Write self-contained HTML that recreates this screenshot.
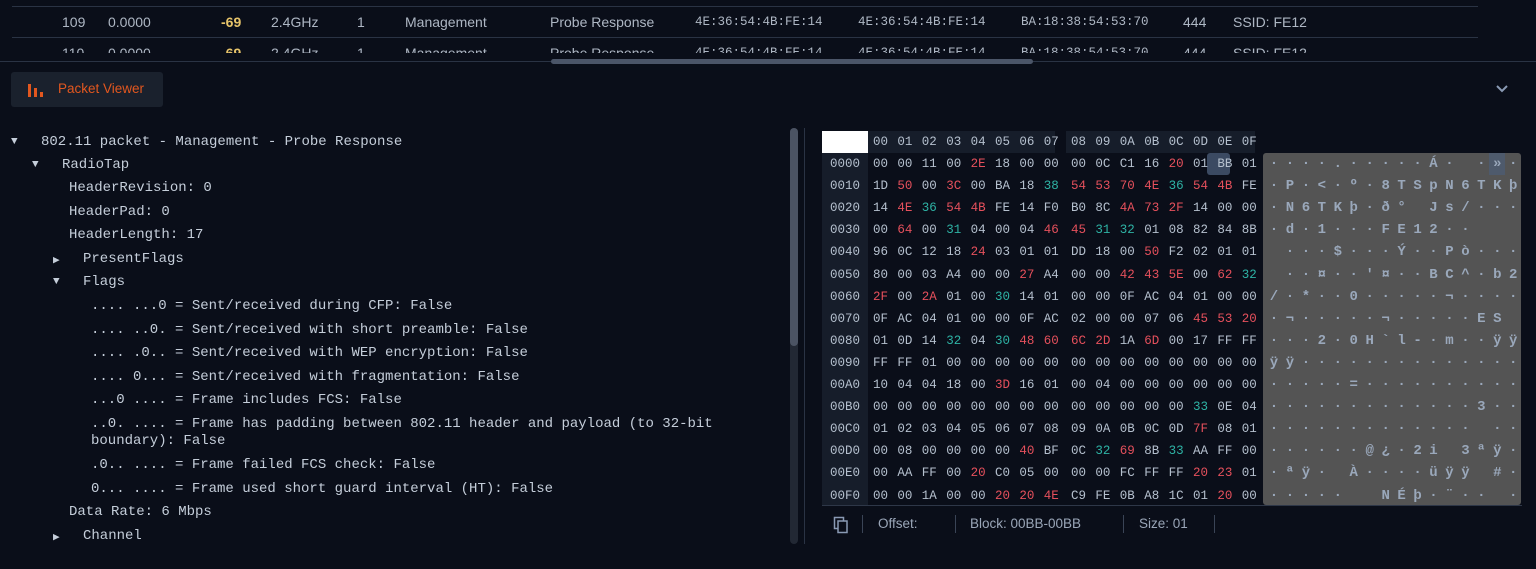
<!DOCTYPE html>
<html><head><meta charset="utf-8"><style>
*{margin:0;padding:0;box-sizing:border-box}
body{width:1536px;height:569px;background:#0a0e19;overflow:hidden;position:relative;font-family:"Liberation Sans",sans-serif;color:#c3ccd8}
.a{position:absolute;white-space:nowrap}
.hl{position:absolute;height:1px;background:#2a3344}
.tb{font-size:14px;color:#aeb7c4}
.mono{font-family:"Liberation Mono",monospace}
.tree{font-family:"Liberation Mono",monospace;font-size:14px;color:#c5ceda}
.tri{font-size:11px;color:#c5ceda}
.hx{font-family:"Liberation Mono",monospace;font-size:12.5px;color:#b5c0ce}
.r{color:#e5505c}.t{color:#2eb3a5}
.asc{font-family:"Liberation Mono",monospace;font-size:14px;font-weight:bold;color:#9aa8bb;text-align:center;width:16px}
</style></head><body>
<div class="hl" style="left:12px;top:6px;width:1466px"></div>
<div class="hl" style="left:12px;top:37px;width:1466px"></div>
<div class="hl" style="left:0;top:61px;width:1536px"></div>
<div style="position:absolute;left:0;top:38px;width:1536px;height:15px;overflow:hidden">
 <div class="a tb" style="left:62px;top:7px">110</div><div class="a tb" style="left:108px;top:7px">0.0000</div>
 <div class="a tb" style="top:7px;color:#e7c46a;font-weight:bold;left:221px">-69</div>
 <div class="a tb" style="left:271px;top:7px">2.4GHz</div><div class="a tb" style="left:357px;top:7px">1</div>
 <div class="a tb" style="left:405px;top:7px">Management</div><div class="a tb" style="left:550px;top:7px">Probe Response</div>
 <div class="a tb mono" style="left:695px;top:8px;font-size:12.5px">4E:36:54:4B:FE:14</div>
 <div class="a tb mono" style="left:858px;top:8px;font-size:12.5px">4E:36:54:4B:FE:14</div>
 <div class="a tb mono" style="left:1021px;top:8px;font-size:12.5px">BA:18:38:54:53:70</div>
 <div class="a tb" style="left:1183px;top:7px">444</div><div class="a tb" style="left:1233px;top:7px">SSID: FE12</div>
</div>
<div class="a tb" style="left:62px;top:14px">109</div><div class="a tb" style="left:108px;top:14px">0.0000</div>
<div class="a tb" style="left:221px;top:14px;color:#e7c46a;font-weight:bold">-69</div>
<div class="a tb" style="left:271px;top:14px">2.4GHz</div><div class="a tb" style="left:357px;top:14px">1</div>
<div class="a tb" style="left:405px;top:14px">Management</div><div class="a tb" style="left:550px;top:14px">Probe Response</div>
<div class="a tb mono" style="left:695px;top:15px;font-size:12.5px">4E:36:54:4B:FE:14</div>
<div class="a tb mono" style="left:858px;top:15px;font-size:12.5px">4E:36:54:4B:FE:14</div>
<div class="a tb mono" style="left:1021px;top:15px;font-size:12.5px">BA:18:38:54:53:70</div>
<div class="a tb" style="left:1183px;top:14px">444</div><div class="a tb" style="left:1233px;top:14px">SSID: FE12</div>
<div style="position:absolute;left:551px;top:59px;width:482px;height:5px;border-radius:3px;background:#4b5568"></div>

<div style="position:absolute;left:11px;top:72px;width:152px;height:35px;background:#1a212d;border-radius:3px"></div>
<svg class="a" style="left:26px;top:81px" width="18" height="17"><rect x="2" y="3" width="3" height="13" fill="#e2571f"/><rect x="8" y="7" width="3" height="9" fill="#e2571f"/><rect x="14" y="11" width="3" height="5" fill="#e2571f"/></svg>
<div class="a" style="left:58px;top:81px;font-size:13.5px;color:#e2571f">Packet Viewer</div>
<svg class="a" style="left:1495px;top:84px" width="14" height="10"><path d="M2 2 L7 7 L12 2" stroke="#8a9ab4" stroke-width="2" fill="none"/></svg>

<div class="tree">
<div class="a tri" style="left:11px;top:136px">▼</div><div class="a" style="left:41px;top:134px">802.11 packet - Management - Probe Response</div>
<div class="a tri" style="left:32px;top:159px">▼</div><div class="a" style="left:62px;top:157px">RadioTap</div>
<div class="a" style="left:69px;top:180px">HeaderRevision: 0</div>
<div class="a" style="left:69px;top:204px">HeaderPad: 0</div>
<div class="a" style="left:69px;top:227px">HeaderLength: 17</div>
<div class="a tri" style="left:53px;top:253px">▶</div><div class="a" style="left:83px;top:251px">PresentFlags</div>
<div class="a tri" style="left:53px;top:276px">▼</div><div class="a" style="left:83px;top:274px">Flags</div>
<div class="a" style="left:91px;top:298px">.... ...0 = Sent/received during CFP: False</div>
<div class="a" style="left:91px;top:322px">.... ..0. = Sent/received with short preamble: False</div>
<div class="a" style="left:91px;top:345px">.... .0.. = Sent/received with WEP encryption: False</div>
<div class="a" style="left:91px;top:369px">.... 0... = Sent/received with fragmentation: False</div>
<div class="a" style="left:91px;top:392px">...0 .... = Frame includes FCS: False</div>
<div class="a" style="left:91px;top:416px">..0. .... = Frame has padding between 802.11 header and payload (to 32-bit</div>
<div class="a" style="left:91px;top:433px">boundary): False</div>
<div class="a" style="left:91px;top:457px">.0.. .... = Frame failed FCS check: False</div>
<div class="a" style="left:91px;top:481px">0... .... = Frame used short guard interval (HT): False</div>
<div class="a" style="left:69px;top:504px">Data Rate: 6 Mbps</div>
<div class="a tri" style="left:53px;top:530px">▶</div><div class="a" style="left:83px;top:528px">Channel</div>
</div>
<div style="position:absolute;left:790px;top:128px;width:8px;height:416px;border-radius:4px;background:#222834"></div>
<div style="position:absolute;left:790px;top:128px;width:8px;height:218px;border-radius:4px;background:#4b5363"></div>
<div style="position:absolute;left:804px;top:128px;width:1px;height:416px;background:#2a3344"></div>

<div style="position:absolute;left:822px;top:131px;width:46px;height:22px;background:#fff"></div>
<div style="position:absolute;left:868px;top:131px;width:187px;height:22px;background:#161d2a"></div>
<div style="position:absolute;left:1066px;top:131px;width:189px;height:22px;background:#161d2a"></div>
<div style="position:absolute;left:822px;top:153px;width:46px;height:352px;background:#161d2a"></div>
<div style="position:absolute;left:1263px;top:153px;width:258px;height:352px;background:#545454;border-radius:3px"></div>
<div style="position:absolute;left:1207px;top:153px;width:23px;height:22px;background:#3b4a62;border-radius:3px"></div>
<div style="position:absolute;left:1489px;top:153px;width:16px;height:22px;background:#4e5a6c"></div>
<div class="hl" style="left:822px;top:505px;width:700px;background:#2e3748"></div>
<div id="hex"></div>
<svg class="a" style="left:833px;top:516px" width="16" height="18"><rect x="1.5" y="1.5" width="9" height="11" fill="none" stroke="#8a9ab4" stroke-width="1.5"/><rect x="5" y="5" width="9" height="11.5" fill="#0a0e19" stroke="#8a9ab4" stroke-width="1.5"/></svg>
<div class="a" style="left:862px;top:515px;width:1px;height:18px;background:#3a4456"></div>
<div class="a" style="left:878px;top:516px;font-size:13.5px;color:#9aa6b8">Offset:</div>
<div class="a" style="left:955px;top:515px;width:1px;height:18px;background:#3a4456"></div>
<div class="a" style="left:970px;top:516px;font-size:13.5px;color:#9aa6b8">Block: 00BB-00BB</div>
<div class="a" style="left:1123px;top:515px;width:1px;height:18px;background:#3a4456"></div>
<div class="a" style="left:1139px;top:516px;font-size:13.5px;color:#9aa6b8">Size: 01</div>
<div class="a" style="left:1214px;top:515px;width:1px;height:18px;background:#3a4456"></div>
<script>
var rows=["00 00 11 00 2E 18 00 00 00 0C C1 16 20 01 BB 01","1D 50 00 3C 00 BA 18 38 54 53 70 4E 36 54 4B FE","14 4E 36 54 4B FE 14 F0 B0 8C 4A 73 2F 14 00 00","00 64 00 31 04 00 04 46 45 31 32 01 08 82 84 8B","96 0C 12 18 24 03 01 01 DD 18 00 50 F2 02 01 01","80 00 03 A4 00 00 27 A4 00 00 42 43 5E 00 62 32","2F 00 2A 01 00 30 14 01 00 00 0F AC 04 01 00 00","0F AC 04 01 00 00 0F AC 02 00 00 07 06 45 53 20","01 0D 14 32 04 30 48 60 6C 2D 1A 6D 00 17 FF FF","FF FF 01 00 00 00 00 00 00 00 00 00 00 00 00 00","10 04 04 18 00 3D 16 01 00 04 00 00 00 00 00 00","00 00 00 00 00 00 00 00 00 00 00 00 00 33 0E 04","01 02 03 04 05 06 07 08 09 0A 0B 0C 0D 7F 08 01","00 08 00 00 00 00 40 BF 0C 32 69 8B 33 AA FF 00","00 AA FF 00 20 C0 05 00 00 00 FC FF FF 20 23 01","00 00 1A 00 00 20 20 4E C9 FE 0B A8 1C 01 20 00"];
var h="";var hd="00 01 02 03 04 05 06 07 08 09 0A 0B 0C 0D 0E 0F".split(" ");
function cx(i){return i<8?873+i*24.4:1071+(i-8)*24.4;}
for(var i=0;i<16;i++)h+='<div class="a hx" style="left:'+cx(i)+'px;top:135px">'+hd[i]+'</div>';
for(var r=0;r<16;r++){var y=157+r*22.1;var b=rows[r].split(" ");
h+='<div class="a hx" style="left:830px;top:'+y+'px">'+("000"+(r*16).toString(16).toUpperCase()).slice(-4)+'</div>';
for(var i=0;i<16;i++){var v=parseInt(b[i],16);var c=(v>=0x30&&v<=0x39)?'t':(v>=0x20&&v<=0x7F)?'r':'';
h+='<div class="a hx '+c+'" style="left:'+cx(i)+'px;top:'+y+'px">'+b[i]+'</div>';
var ch;if(v<0x20)ch='·';else if(v==0x20||(v>=0x7F&&v<=0xA0))ch='';else if(v==0x3C)ch='&lt;';else if(v==0x3E)ch='&gt;';else if(v==0x26)ch='&amp;';else ch=String.fromCharCode(v);
h+='<div class="a asc '+c+'" style="left:'+(1266+i*15.95)+'px;top:'+(y-1)+'px">'+ch+'</div>';}}
document.getElementById('hex').innerHTML=h;
</script>
</body></html>
